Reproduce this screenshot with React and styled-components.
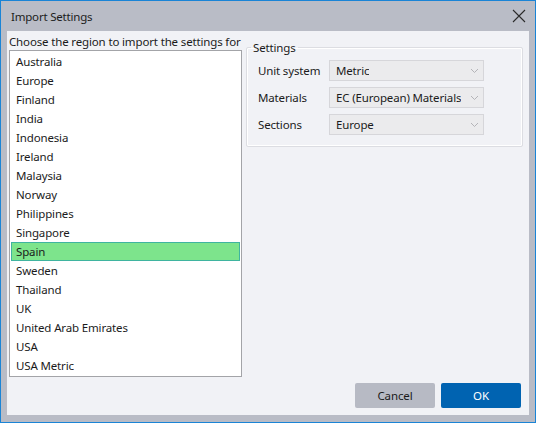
import React from "react";
import styled, { createGlobalStyle } from "styled-components";

const Global = createGlobalStyle`
  html, body { margin: 0; padding: 0; background: #ffffff; }
  body {
    font-family: "Noto Sans", "Open Sans", sans-serif;
    font-size: 11.5px;
    letter-spacing: -0.15px;
    color: #1b1b1b;
  }
  * { box-sizing: border-box; }
`;

const Frame = styled.div`
  width: 536px;
  height: 423px;
  border: 1px solid #1a84d6;
  background: #b9bcc6;
  display: flex;
  flex-direction: column;
`;

const TitleBar = styled.div`
  height: 31px;
  display: flex;
  align-items: center;
  justify-content: space-between;
  padding: 0 8px 0 10px;
  font-size: 11.5px;
  letter-spacing: -0.2px;
  color: #1c1c1c;
`;

const CloseButton = styled.button`
  border: none;
  background: transparent;
  padding: 0;
  width: 16px;
  height: 16px;
  display: flex;
  align-items: center;
  justify-content: center;
`;

const Content = styled.div`
  flex: 1;
  margin: 0 6px 7px 6px;
  background: #f1f2f6;
  display: flex;
  flex-direction: column;
  padding: 3px 6px 7px 2px;
`;

const Main = styled.div`
  display: flex;
  gap: 4px;
`;

const LeftColumn = styled.div`
  width: 233px;
  display: flex;
  flex-direction: column;
`;

const Caption = styled.div`
  height: 16px;
  line-height: 15px;
  white-space: nowrap;
`;

const List = styled.ul`
  list-style: none;
  margin: 0;
  padding: 1px 1px;
  height: 327px;
  background: #ffffff;
  border: 1px solid #a3a4a8;
`;

const Item = styled.li`
  height: 19px;
  line-height: 19px;
  padding-left: 5px;
  background: ${(p) => (p.$selected ? "#7de48c" : "transparent")};
  box-shadow: ${(p) => (p.$selected ? "inset 0 0 0 1px #3fb4a0" : "none")};
`;

const Group = styled.fieldset`
  flex: 1;
  margin: 6px 0 0 0;
  height: 107px;
  padding: 0;
  border: 1px solid #dcdde2;
  box-shadow: inset 0 0 0 1px #ffffff;
  border-radius: 2px;
`;

const Legend = styled.legend`
  padding: 0 2px;
  margin-left: 4px;
  line-height: 15px;
`;

const GroupBody = styled.div`
  display: flex;
  flex-direction: column;
  gap: 6px;
  padding: 5px 10px 10px 11px;
`;

const Row = styled.div`
  display: flex;
  align-items: center;
  height: 21px;
`;

const RowLabel = styled.div`
  width: 71px;
  white-space: nowrap;
`;

const Select = styled.div`
  width: 155px;
  height: 21px;
  background: #ebebed;
  border: 1px solid #d6d6da;
  display: flex;
  align-items: center;
  justify-content: space-between;
  padding: 0 4px 0 6px;
  white-space: nowrap;
`;

const SelectValue = styled.span`
  overflow: hidden;
`;

const ChevronBox = styled.span`
  flex-shrink: 0;
  display: flex;
  margin-left: 2px;
`;

const Footer = styled.div`
  margin-top: 6px;
  display: flex;
  justify-content: flex-end;
  gap: 6px;
  padding-right: 2px;
`;

const Button = styled.button`
  width: 80px;
  height: 25px;
  border: none;
  border-radius: 2px;
  font-family: "Noto Sans", "Open Sans", sans-serif;
  font-size: 11.5px;
  letter-spacing: -0.1px;
  background: ${(p) => (p.$primary ? "#0063b1" : "#b7bac4")};
  color: ${(p) => (p.$primary ? "#ffffff" : "#1b1b1b")};
`;

const Chevron = () => (
  <svg width="9" height="6" viewBox="0 0 9 6">
    <path d="M1 1 L4.5 4.5 L8 1" fill="none" stroke="#b4b4b8" strokeWidth="1" />
  </svg>
);

const regions = [
  "Australia", "Europe", "Finland", "India", "Indonesia", "Ireland", "Malaysia",
  "Norway", "Philippines", "Singapore", "Spain", "Sweden", "Thailand", "UK",
  "United Arab Emirates", "USA", "USA Metric",
];

const settings = [
  ["Unit system", "Metric"],
  ["Materials", "EC (European) Materials"],
  ["Sections", "Europe"],
];

export default function App() {
  return (
    <>
      <Global />
      <Frame>
        <TitleBar>
          <span>Import Settings</span>
          <CloseButton aria-label="Close">
            <svg width="14" height="14" viewBox="0 0 14 14">
              <path d="M1 1 L13 13 M13 1 L1 13" stroke="#2a2a2a" strokeWidth="1.1" />
            </svg>
          </CloseButton>
        </TitleBar>
        <Content>
          <Main>
            <LeftColumn>
              <Caption>Choose the region to import the settings for</Caption>
              <List>
                {regions.map((r) => (
                  <Item key={r} $selected={r === "Spain"}>{r}</Item>
                ))}
              </List>
            </LeftColumn>
            <Group>
              <Legend>Settings</Legend>
              <GroupBody>
                {settings.map(([label, value]) => (
                  <Row key={label}>
                    <RowLabel>{label}</RowLabel>
                    <Select>
                      <SelectValue>{value}</SelectValue>
                      <ChevronBox><Chevron /></ChevronBox>
                    </Select>
                  </Row>
                ))}
              </GroupBody>
            </Group>
          </Main>
          <Footer>
            <Button>Cancel</Button>
            <Button $primary>OK</Button>
          </Footer>
        </Content>
      </Frame>
    </>
  );
}
